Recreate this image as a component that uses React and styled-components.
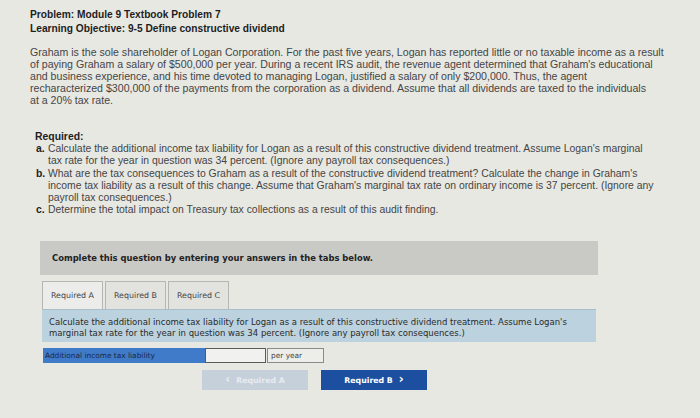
import React from "react";
import styled, { createGlobalStyle } from "styled-components";

const GlobalStyle = createGlobalStyle`
  html, body {
    margin: 0;
    padding: 0;
    background: #e8e8e3;
  }
  body {
    width: 700px;
    height: 418px;
    overflow: hidden;
  }
`;

const intro = [
  "Graham is the sole shareholder of Logan Corporation. For the past five years, Logan has reported little or no taxable income as a result",
  "of paying Graham a salary of $500,000 per year. During a recent IRS audit, the revenue agent determined that Graham's educational",
  "and business experience, and his time devoted to managing Logan, justified a salary of only $200,000. Thus, the agent",
  "recharacterized $300,000 of the payments from the corporation as a dividend. Assume that all dividends are taxed to the individuals",
  "at a 20% tax rate.",
];

const items = [
  {
    letter: "a.",
    lines: [
      "Calculate the additional income tax liability for Logan as a result of this constructive dividend treatment. Assume Logan's marginal",
      "tax rate for the year in question was 34 percent. (Ignore any payroll tax consequences.)",
    ],
  },
  {
    letter: "b.",
    lines: [
      "What are the tax consequences to Graham as a result of the constructive dividend treatment? Calculate the change in Graham's",
      "income tax liability as a result of this change. Assume that Graham's marginal tax rate on ordinary income is 37 percent. (Ignore any",
      "payroll tax consequences.)",
    ],
  },
  {
    letter: "c.",
    lines: ["Determine the total impact on Treasury tax collections as a result of this audit finding."],
  },
];

function App() {
  return (
    <>
      <GlobalStyle />
      <Page>
        <Header>
          <HeadLine>Problem: Module 9 Textbook Problem 7</HeadLine>
          <HeadLine>Learning Objective: 9-5 Define constructive dividend</HeadLine>
        </Header>
        <Intro>
          {intro.map((l) => (
            <Line key={l}>{l}</Line>
          ))}
        </Intro>
        <Required>
          <ReqTitle>Required:</ReqTitle>
          {items.map((it) => (
            <ReqItem key={it.letter}>
              <Letter>{it.letter}</Letter>
              <div>
                {it.lines.map((l) => (
                  <Line key={l}>{l}</Line>
                ))}
              </div>
            </ReqItem>
          ))}
        </Required>

        <Question>
          <Banner>Complete this question by entering your answers in the tabs below.</Banner>
          <Tabs>
            <Tab active>Required A</Tab>
            <Tab>Required B</Tab>
            <Tab>Required C</Tab>
          </Tabs>
          <Prompt>
            <Line>
              Calculate the additional income tax liability for Logan as a result of this constructive dividend treatment. Assume Logan's
            </Line>
            <Line>marginal tax rate for the year in question was 34 percent. (Ignore any payroll tax consequences.)</Line>
          </Prompt>
          <AnswerRow>
            <AnswerLabel>Additional income tax liability</AnswerLabel>
            <AnswerInput />
            <Unit>per year</Unit>
          </AnswerRow>
          <NavRow>
            <NavButton disabled>
              <Chevron>&lsaquo;</Chevron> Required A
            </NavButton>
            <NavButton primary>
              Required B <Chevron>&rsaquo;</Chevron>
            </NavButton>
          </NavRow>
        </Question>
      </Page>
    </>
  );
}

const Page = styled.div`
  padding: 8px 0 0 30px;
  font-family: "Liberation Sans", Arial, sans-serif;
  color: #2b2b2b;
`;

const Header = styled.div`
  display: flex;
  flex-direction: column;
`;

const HeadLine = styled.div`
  font-size: 10.2px;
  font-weight: bold;
  line-height: 14px;
  color: #1e1e1e;
`;

const Line = styled.div`
  white-space: nowrap;
`;

const Intro = styled.div`
  margin-top: 10px;
  font-size: 10.6px;
  line-height: 12px;
  color: #454545;
`;

const Required = styled.div`
  margin-top: 25px;
  padding-left: 5px;
  font-size: 10.4px;
  line-height: 12px;
  color: #454545;
`;

const ReqTitle = styled.div`
  font-weight: bold;
  color: #1e1e1e;
  font-size: 10.4px;
`;

const ReqItem = styled.div`
  display: flex;
  padding-left: 1px;
  margin-bottom: 0.5px;
`;

const Letter = styled.span`
  flex: 0 0 12px;
  font-weight: bold;
  color: #1e1e1e;
`;

const Question = styled.div`
  margin-top: 25px;
  margin-left: 10px;
  width: 558px;
  font-family: "DejaVu Sans", Verdana, sans-serif;
`;

const Banner = styled.div`
  background: #c9c9c6;
  height: 34px;
  display: flex;
  align-items: center;
  padding-left: 12px;
  font-size: 8.4px;
  font-weight: bold;
  color: #222;
`;

const Tabs = styled.div`
  display: flex;
  gap: 2px;
  margin: 6px 0 0 2px;
`;

const Tab = styled.div`
  width: 61px;
  height: 28px;
  box-sizing: border-box;
  display: flex;
  align-items: center;
  justify-content: center;
  font-size: 7.9px;
  color: #444;
  background: ${({ active }) => (active ? "#ececea" : "#e2e2df")};
  border: 1px solid #b5b5b2;
  border-bottom: none;
`;

const Prompt = styled.div`
  margin-left: 2px;
  width: 554px;
  height: 33px;
  box-sizing: border-box;
  background: #bcd2de;
  padding: 7px 7px 0 7px;
  font-size: 8.5px;
  line-height: 11px;
  color: #2a2a2a;
  border-top: 1px solid #a9bfcb;
`;

const AnswerRow = styled.div`
  display: flex;
  margin: 6px 0 0 3px;
  height: 15px;
`;

const AnswerLabel = styled.div`
  width: 162px;
  background: #3f7bc8;
  color: #1a2848;
  font-size: 7.4px;
  display: flex;
  align-items: center;
  padding-left: 2px;
  box-sizing: border-box;
`;

const AnswerInput = styled.div`
  width: 61px;
  background: #f1f1ef;
  border: 1px solid #5a5a5a;
  box-sizing: border-box;
`;

const Unit = styled.div`
  width: 57px;
  margin-left: 1px;
  border: 1px solid #8a8a8a;
  box-sizing: border-box;
  background: #ededea;
  font-size: 7.4px;
  color: #444;
  display: flex;
  align-items: center;
  padding-left: 3px;
`;

const NavRow = styled.div`
  display: flex;
  gap: 13px;
  margin: 7px 0 0 162px;
`;

const NavButton = styled.div`
  width: 106px;
  height: 20px;
  display: flex;
  align-items: center;
  justify-content: center;
  gap: 6px;
  font-size: 7.8px;
  font-weight: bold;
  color: ${({ primary }) => (primary ? "#ffffff" : "#e6ebf0")};
  background: ${({ primary }) => (primary ? "#1c4fa0" : "#c6d0db")};
`;

const Chevron = styled.span`
  font-size: 12px;
  line-height: 1;
  margin-top: -2px;
`;

export default App;
